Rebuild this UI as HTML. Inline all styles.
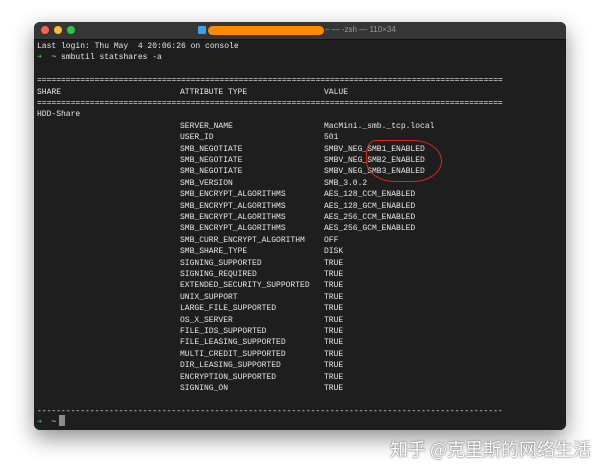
<!DOCTYPE html>
<html><head><meta charset="utf-8"><style>
html,body{margin:0;padding:0;width:600px;height:474px;background:#fff;overflow:hidden}
.win{position:absolute;left:34px;top:22px;width:532px;height:408px;background:#1e1e1e;border-radius:6px;box-shadow:0 8px 22px rgba(0,0,0,.45);overflow:hidden}
.tb{height:17px;background:#363636;border-bottom:1px solid #111;position:relative}
.d{position:absolute;top:4px;width:8px;height:8px;border-radius:50%}
.fo{position:absolute;left:164px;top:4px;width:8px;height:8px;background:#3ba4e6;border-radius:1px}
.or{position:absolute;left:174px;top:4px;width:116px;height:9px;background:#ff8a00;border-radius:5px}
.tt{position:absolute;left:291px;top:3px;font:8px "Liberation Sans",sans-serif;color:#9a9a9a;white-space:pre}
.r{position:absolute;font:8px/11.4px "Liberation Mono",monospace;color:#e6e6e6;white-space:pre}
.g{color:#39c03b}
.c{position:absolute;left:25px;top:393px;width:6px;height:11px;background:#8a8a8a}
.circ{position:absolute;left:332px;top:118px;width:74px;height:40px;border:1.5px solid #d9261c;border-radius:10px 30px 30px 30px/14px 22px 22px 22px}
.wm{position:absolute;left:390px;top:436px;font:18px "Noto Sans CJK SC",sans-serif;color:#fff;text-shadow:0 0 2px #777,0 0 1px #555}
</style></head><body>
<div class="win">
<div class="tb"><div class="d" style="left:7px;background:#fe5f57"></div><div class="d" style="left:20px;background:#febc2e"></div><div class="d" style="left:33px;background:#28c840"></div><div class="fo"></div><div class="or"></div><div class="tt">– — -zsh — 110×34</div></div>
<div id="t"></div>
<div class="c"></div>
<div class="circ"></div>
</div>
<div class="wm">知乎 @克里斯的网络生活</div>
<script>
var rows=[["Last login: Thu May  4 20:06:26 on console"],["<span class=g>➜</span>  ~ smbutil statshares -a"],[""],["=".repeat(97)],["SHARE","ATTRIBUTE TYPE","VALUE"],["=".repeat(97)],["HDD-Share"],
["","SERVER_NAME","MacMini._smb._tcp.local"],["","USER_ID","501"],["","SMB_NEGOTIATE","SMBV_NEG_SMB1_ENABLED"],["","SMB_NEGOTIATE","SMBV_NEG_SMB2_ENABLED"],["","SMB_NEGOTIATE","SMBV_NEG_SMB3_ENABLED"],["","SMB_VERSION","SMB_3.0.2"],["","SMB_ENCRYPT_ALGORITHMS","AES_128_CCM_ENABLED"],["","SMB_ENCRYPT_ALGORITHMS","AES_128_GCM_ENABLED"],["","SMB_ENCRYPT_ALGORITHMS","AES_256_CCM_ENABLED"],["","SMB_ENCRYPT_ALGORITHMS","AES_256_GCM_ENABLED"],["","SMB_CURR_ENCRYPT_ALGORITHM","OFF"],["","SMB_SHARE_TYPE","DISK"],["","SIGNING_SUPPORTED","TRUE"],["","SIGNING_REQUIRED","TRUE"],["","EXTENDED_SECURITY_SUPPORTED","TRUE"],["","UNIX_SUPPORT","TRUE"],["","LARGE_FILE_SUPPORTED","TRUE"],["","OS_X_SERVER","TRUE"],["","FILE_IDS_SUPPORTED","TRUE"],["","FILE_LEASING_SUPPORTED","TRUE"],["","MULTI_CREDIT_SUPPORTED","TRUE"],["","DIR_LEASING_SUPPORTED","TRUE"],["","ENCRYPTION_SUPPORTED","TRUE"],["","SIGNING_ON","TRUE"],[""],["-".repeat(97)],["<span class=g>➜</span>  ~"]];
var h="",xs=[3,146,290];
rows.forEach(function(r,i){r.forEach(function(c,j){if(c)h+='<div class="r" style="left:'+xs[j]+'px;top:'+(19+i*11.4)+'px">'+c+'</div>';});});
document.getElementById('t').innerHTML=h;
</script>
</body></html>
